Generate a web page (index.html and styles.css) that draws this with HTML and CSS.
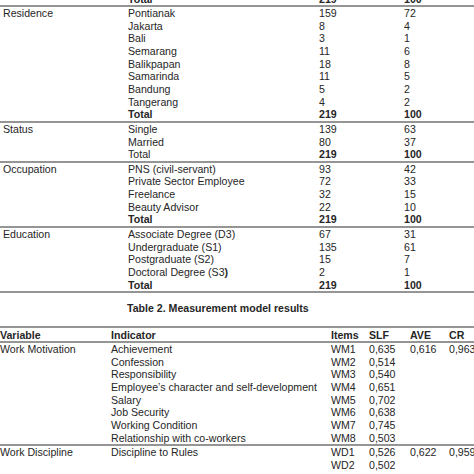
FILE: index.html
```html
<!DOCTYPE html>
<html>
<head>
<meta charset="utf-8">
<link rel="stylesheet" href="styles.css">
</head>
<body>
<div class="page">
  <div class="t1">
    <div class="row"><span></span><span class="b">Total</span><span class="b">219</span><span class="b">100</span></div>
    <div class="grp">
      <div class="row"><span>Residence</span><span>Pontianak</span><span>159</span><span>72</span></div>
      <div class="row"><span></span><span>Jakarta</span><span>8</span><span>4</span></div>
      <div class="row"><span></span><span>Bali</span><span>3</span><span>1</span></div>
      <div class="row"><span></span><span>Semarang</span><span>11</span><span>6</span></div>
      <div class="row"><span></span><span>Balikpapan</span><span>18</span><span>8</span></div>
      <div class="row"><span></span><span>Samarinda</span><span>11</span><span>5</span></div>
      <div class="row"><span></span><span>Bandung</span><span>5</span><span>2</span></div>
      <div class="row"><span></span><span>Tangerang</span><span>4</span><span>2</span></div>
      <div class="row"><span></span><span class="b">Total</span><span class="b">219</span><span class="b">100</span></div>
    </div>
    <div class="grp">
      <div class="row"><span>Status</span><span>Single</span><span>139</span><span>63</span></div>
      <div class="row"><span></span><span>Married</span><span>80</span><span>37</span></div>
      <div class="row"><span></span><span>Total</span><span class="b">219</span><span class="b">100</span></div>
    </div>
    <div class="grp">
      <div class="row"><span>Occupation</span><span>PNS (civil-servant)</span><span>93</span><span>42</span></div>
      <div class="row"><span></span><span>Private Sector Employee</span><span>72</span><span>33</span></div>
      <div class="row"><span></span><span>Freelance</span><span>32</span><span>15</span></div>
      <div class="row"><span></span><span>Beauty Advisor</span><span>22</span><span>10</span></div>
      <div class="row"><span></span><span class="b">Total</span><span class="b">219</span><span class="b">100</span></div>
    </div>
    <div class="grp last">
      <div class="row"><span>Education</span><span>Associate Degree (D3)</span><span>67</span><span>31</span></div>
      <div class="row"><span></span><span>Undergraduate (S1)</span><span>135</span><span>61</span></div>
      <div class="row"><span></span><span>Postgraduate (S2)</span><span>15</span><span>7</span></div>
      <div class="row"><span></span><span>Doctoral Degree (S3<span class="b">)</span></span><span>2</span><span>1</span></div>
      <div class="row"><span></span><span class="b">Total</span><span class="b">219</span><span class="b">100</span></div>
    </div>
  </div>

  <div class="caption">Table 2. Measurement model results</div>

  <div class="t2">
    <div class="row head"><span>Variable</span><span>Indicator</span><span>Items</span><span>SLF</span><span>AVE</span><span>CR</span></div>
    <div class="grp2">
      <div class="row"><span>Work Motivation</span><span>Achievement</span><span>WM1</span><span>0,635</span><span>0,616</span><span>0,963</span></div>
      <div class="row"><span></span><span>Confession</span><span>WM2</span><span>0,514</span><span></span><span></span></div>
      <div class="row"><span></span><span>Responsibility</span><span>WM3</span><span>0,540</span><span></span><span></span></div>
      <div class="row"><span></span><span>Employee’s character and self-development</span><span>WM4</span><span>0,651</span><span></span><span></span></div>
      <div class="row"><span></span><span>Salary</span><span>WM5</span><span>0,702</span><span></span><span></span></div>
      <div class="row"><span></span><span>Job Security</span><span>WM6</span><span>0,638</span><span></span><span></span></div>
      <div class="row"><span></span><span>Working Condition</span><span>WM7</span><span>0,745</span><span></span><span></span></div>
      <div class="row"><span></span><span>Relationship with co-workers</span><span>WM8</span><span>0,503</span><span></span><span></span></div>
    </div>
    <div class="grp2">
      <div class="row"><span>Work Discipline</span><span>Discipline to Rules</span><span>WD1</span><span>0,526</span><span>0,622</span><span>0,959</span></div>
      <div class="row"><span></span><span></span><span>WD2</span><span>0,502</span><span></span><span></span></div>
    </div>
  </div>
</div>
</body>
</html>
```

FILE: styles.css
```css
html, body {
  margin: 0;
  padding: 0;
  background: #ffffff;
}
body {
  width: 474px;
  height: 474px;
  overflow: hidden;
  font-family: "Liberation Sans", Arial, sans-serif;
  font-size: 10.6px;
  color: #262626;
}
.page {
  margin-top: -7.5px;
}
.row {
  display: grid;
  height: 12.65px;
  line-height: 12.65px;
  white-space: nowrap;
}
.t1 .row {
  grid-template-columns: 125px 191px 85px 1fr;
  padding-left: 3px;
}
.grp {
  border-top: 2px solid #959595;
}
.grp.last {
  border-bottom: 2px solid #959595;
}
.b {
  font-weight: bold;
}
.caption {
  margin-top: 8.5px;
  height: 12.7px;
  line-height: 12.7px;
  padding-left: 127px;
  font-weight: bold;
  white-space: nowrap;
}
.t2 {
  margin-top: 11.5px;
  border-top: 2px solid #959595;
}
.t2 .row {
  grid-template-columns: 111px 220px 38px 41px 39px 1fr;
  height: 12.7px;
  line-height: 12.7px;
}
.t2 .row.head {
  height: 13px;
  line-height: 14px;
  font-weight: bold;
}
.grp2 {
  border-top: 2px solid #959595;
}
```
